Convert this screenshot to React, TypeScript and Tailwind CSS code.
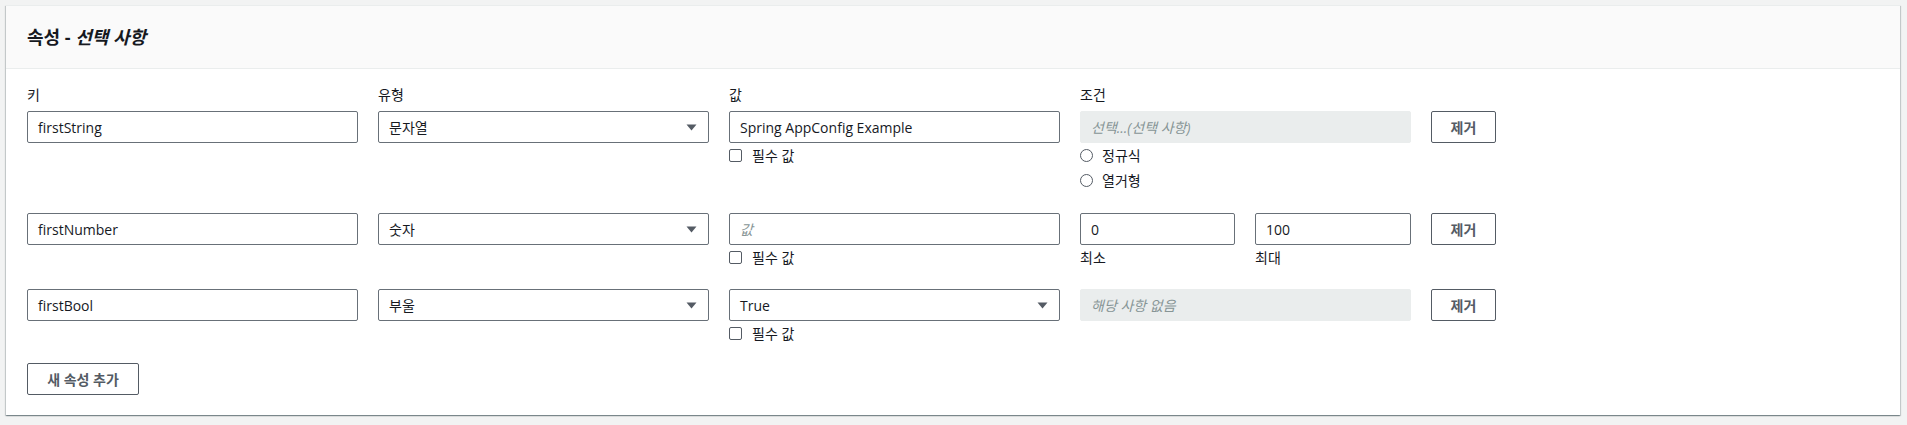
import React from 'react';

const font = '"Open Sans", "Noto Sans CJK KR", sans-serif';

const Caret: React.FC = () => (
  <svg width="11" height="7" viewBox="0 0 11 7" className="shrink-0">
    <path d="M0.5 0.5 H10.5 L5.5 6.5 Z" fill="#545b64" />
  </svg>
);

const TextBox: React.FC<{ value?: string; placeholder?: string; disabled?: boolean }> = ({
  value,
  placeholder,
  disabled,
}) => {
  if (disabled) {
    return (
      <div className="h-[32px] flex items-center px-[10px] rounded-[2px] bg-[#eaeded] border border-[#eaeded] text-[14px] italic text-[#879596]">
        {placeholder}
      </div>
    );
  }
  return (
    <div className="h-[32px] flex items-center px-[10px] rounded-[2px] bg-white border border-[#687078] text-[14px] text-[#16191f]">
      {value ? value : <span className="italic text-[#879596]">{placeholder}</span>}
    </div>
  );
};

const SelectBox: React.FC<{ value: string }> = ({ value }) => (
  <div className="h-[32px] flex items-center justify-between pl-[10px] pr-[11px] rounded-[2px] bg-white border border-[#687078] text-[14px] text-[#16191f]">
    <span>{value}</span>
    <Caret />
  </div>
);

const Checkbox: React.FC<{ label: string }> = ({ label }) => (
  <div className="h-[24px] flex items-center gap-[10px] text-[14px] text-[#16191f]">
    <span className="w-[13px] h-[13px] border border-[#545b64] rounded-[2px] bg-white" />
    <span>{label}</span>
  </div>
);

const Radio: React.FC<{ label: string }> = ({ label }) => (
  <div className="h-[25px] flex items-center gap-[9px] text-[14px] text-[#16191f]">
    <span className="w-[13px] h-[13px] border border-[#545b64] rounded-full bg-white" />
    <span>{label}</span>
  </div>
);

const RemoveButton: React.FC = () => (
  <button className="h-[32px] w-[65px] border border-[#545b64] rounded-[2px] bg-white text-[14px] font-bold text-[#545b64]">
    제거
  </button>
);

const Label: React.FC<{ children: React.ReactNode }> = ({ children }) => (
  <div className="h-[20px] mb-[6px] text-[14px] leading-[20px] text-[#16191f]">{children}</div>
);

const gridCls = 'grid grid-cols-[331px_331px_331px_331px_65px] gap-x-[20px] items-start';

export default function App() {
  return (
    <div className="min-h-[425px] bg-[#f2f3f3] pl-[6px] pr-[7px] pt-[5px]" style={{ fontFamily: font }}>
      <div className="bg-white shadow-[0_1px_1px_0_rgba(0,28,36,0.3),1px_1px_1px_0_rgba(0,28,36,0.15),-1px_1px_1px_0_rgba(0,28,36,0.15)] border-t border-[#eaeded]">
        <div className="h-[63px] flex items-center px-[21px] bg-[#fafafa] border-b border-[#eaeded]">
          <h2 className="text-[18px] font-bold text-[#16191f]">
            속성 - <i>선택 사항</i>
          </h2>
        </div>

        <div className="px-[21px] pt-[16px] pb-[20px]">
          <div className="flex flex-col gap-[20px]">
            {/* row 1 */}
            <div className={gridCls}>
              <div>
                <Label>키</Label>
                <TextBox value="firstString" />
              </div>
              <div>
                <Label>유형</Label>
                <SelectBox value="문자열" />
              </div>
              <div>
                <Label>값</Label>
                <TextBox value="Spring AppConfig Example" />
                <Checkbox label="필수 값" />
              </div>
              <div>
                <Label>조건</Label>
                <TextBox placeholder="선택...(선택 사항)" disabled />
                <Radio label="정규식" />
                <Radio label="열거형" />
              </div>
              <div className="pt-[26px]">
                <RemoveButton />
              </div>
            </div>

            {/* row 2 */}
            <div className={gridCls}>
              <TextBox value="firstNumber" />
              <SelectBox value="숫자" />
              <div>
                <TextBox placeholder="값" />
                <Checkbox label="필수 값" />
              </div>
              <div className="grid grid-cols-[155px_156px] gap-x-[20px]">
                <div>
                  <TextBox value="0" />
                  <div className="h-[24px] flex items-center text-[14px] text-[#16191f]">최소</div>
                </div>
                <div>
                  <TextBox value="100" />
                  <div className="h-[24px] flex items-center text-[14px] text-[#16191f]">최대</div>
                </div>
              </div>
              <RemoveButton />
            </div>

            {/* row 3 */}
            <div className={gridCls}>
              <TextBox value="firstBool" />
              <SelectBox value="부울" />
              <div>
                <SelectBox value="True" />
                <Checkbox label="필수 값" />
              </div>
              <TextBox placeholder="해당 사항 없음" disabled />
              <RemoveButton />
            </div>
          </div>

          <button className="mt-[18px] h-[32px] w-[112px] border border-[#545b64] rounded-[2px] bg-white text-[14px] font-bold text-[#545b64]">
            새 속성 추가
          </button>
        </div>
      </div>
    </div>
  );
}
